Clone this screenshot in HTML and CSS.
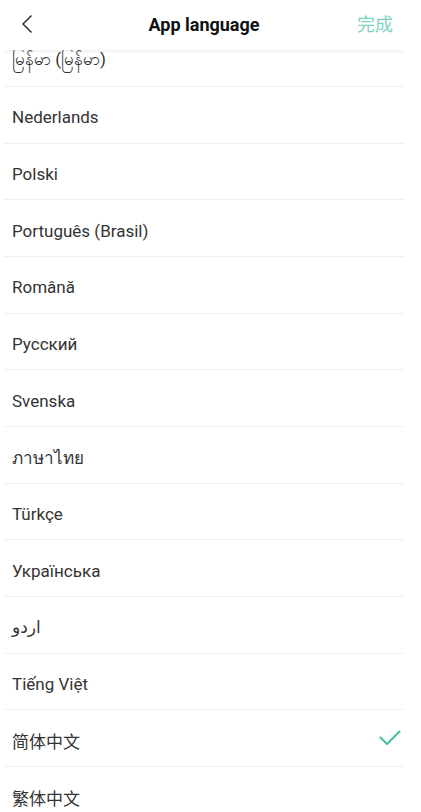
FILE: index.html
```html
<!DOCTYPE html>
<html lang="en">
<head>
    <meta charset="UTF-8">
    <meta name="viewport" content="width=device-width, initial-scale=1.0">
    <title>App language</title>
    <link rel="stylesheet" href="styles.css">
</head>
<body>
    <div class="app">
        <header class="topbar">
            <button class="back" aria-label="Back">
                <svg width="12" height="18" viewBox="0 0 12 18"><path d="M10 1 L2 9 L10 17" fill="none" stroke="#333" stroke-width="1.6" stroke-linecap="round" stroke-linejoin="round"/></svg>
            </button>
            <h1 class="title">App language</h1>
            <button class="done">完成</button>
        </header>
        <div class="viewport">
            <ul class="lang-list">
                <li class="lang-row">မြန်မာ (မြန်မာ)</li>
                <li class="lang-row">Nederlands</li>
                <li class="lang-row">Polski</li>
                <li class="lang-row">Português (Brasil)</li>
                <li class="lang-row">Română</li>
                <li class="lang-row">Русский</li>
                <li class="lang-row">Svenska</li>
                <li class="lang-row">ภาษาไทย</li>
                <li class="lang-row">Türkçe</li>
                <li class="lang-row">Українська</li>
                <li class="lang-row">اردو</li>
                <li class="lang-row">Tiếng Việt</li>
                <li class="lang-row selected">
                    <span>简体中文</span>
                    <svg class="check" width="22" height="16" viewBox="0 0 22 16"><path d="M1.5 7.5 L8 14 L20.5 1.5" fill="none" stroke="#4dbfa8" stroke-width="2.2" stroke-linecap="round" stroke-linejoin="round"/></svg>
                </li>
                <li class="lang-row">繁体中文</li>
            </ul>
        </div>
    </div>
</body>
</html>
```

FILE: styles.css
```css
body {
    margin: 0;
    padding: 0;
    background: #fff;
    font-family: Roboto, "Noto Sans", "DejaVu Sans", "Noto Sans CJK SC", sans-serif;
    color: #333;
}
.app {
    width: 400px;
    margin-left: 4px;
    height: 812px;
    overflow: hidden;
}
.topbar {
    position: relative;
    z-index: 2;
    height: 50px;
    display: flex;
    align-items: center;
    justify-content: space-between;
    padding: 0 11px 0 8px;
    background: #fff;
    box-shadow: 0 2px 3px rgba(0, 0, 0, 0.06);
}
.back {
    width: 30px;
    height: 30px;
    padding: 0;
    border: none;
    background: none;
    display: flex;
    align-items: center;
    justify-content: center;
    margin-top: -2px;
}
.title {
    position: absolute;
    left: 0;
    right: 0;
    margin: 0;
    margin-top: -2px;
    text-align: center;
    font-size: 18px;
    font-weight: bold;
    color: #111;
    pointer-events: none;
}
.done {
    border: none;
    background: none;
    padding: 0;
    font-size: 18px;
    color: #7dd2bf;
    font-family: "Noto Sans CJK SC", sans-serif;
    margin-top: -4px;
}
.viewport {
    position: relative;
    z-index: 1;
}
.lang-list {
    list-style: none;
    margin: -19.67px 0 0;
    padding: 0;
}
.lang-row {
    box-sizing: border-box;
    height: 56.67px;
    display: flex;
    align-items: center;
    justify-content: space-between;
    padding: 5px 3px 0 8px;
    border-bottom: 1px solid #f0f0f0;
    font-size: 17px;
    color: #333;
}
.check {
    display: block;
    margin-top: -5px;
}
```
